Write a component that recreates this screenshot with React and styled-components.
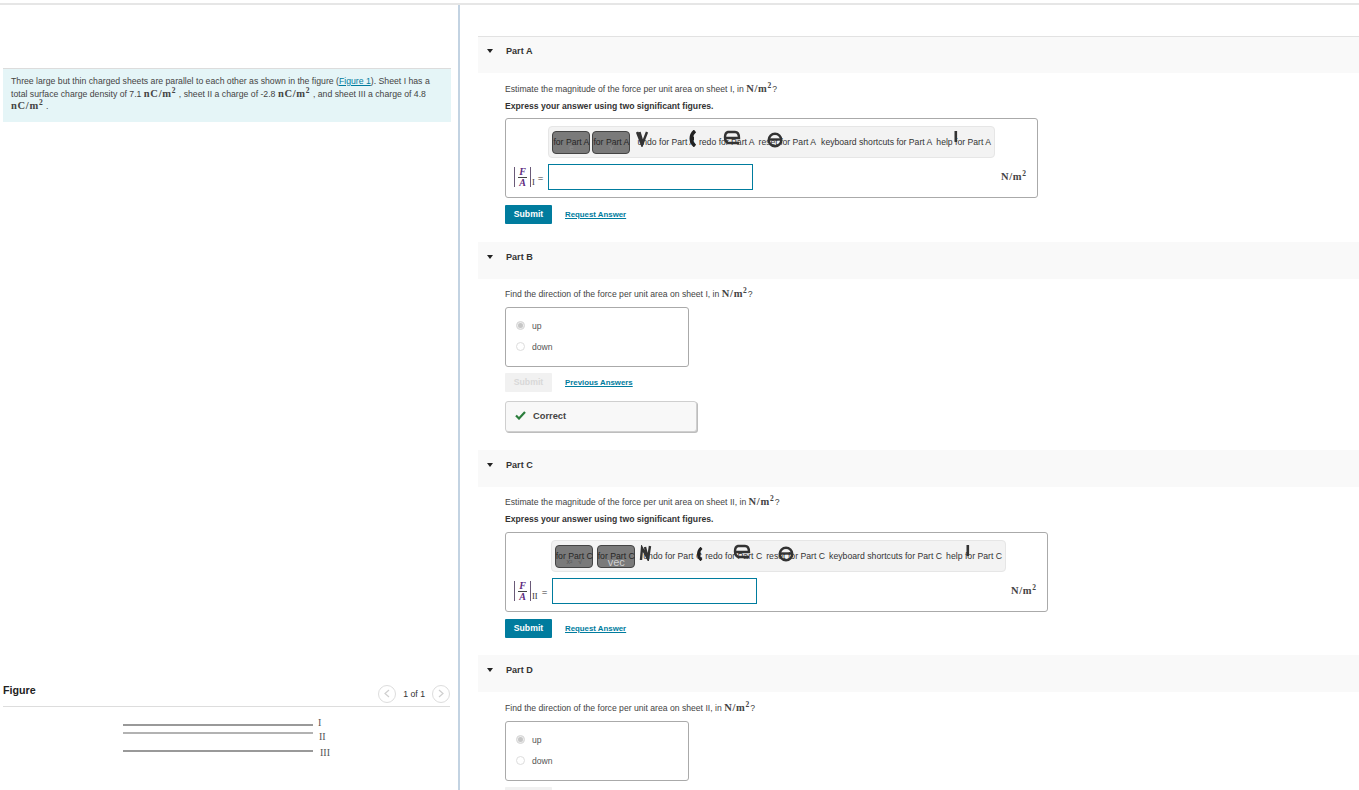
import React from "react";
import styled, { createGlobalStyle } from "styled-components";

const GlobalStyle = createGlobalStyle`
  html, body {
    margin: 0;
    padding: 0;
    height: 790px;
    overflow: hidden;
    background: #fff;
    font-family: "Liberation Sans", Arial, sans-serif;
    color: #333;
  }
  * { box-sizing: border-box; }
`;

const Page = styled.div`
  display: flex;
  height: 787px;
  margin-top: 3px;
  border-top: 2px solid #e6e6e6;
  overflow: hidden;
`;

const LeftPanel = styled.aside`
  display: flex;
  flex-direction: column;
  flex: 0 0 460px;
  padding: 63px 7px 0 3px;
  border-right: 2px solid #c3d3e2;
`;

const Intro = styled.div`
  background: #e5f5f7;
  border-top: 1px solid #dcdcdc;
  padding: 6px 8px 0;
  font-size: 8.7px;
  line-height: 12.5px;
  height: 54px;
  color: #444;
`;

const Link = styled.a`
  color: #007c9e;
  text-decoration: underline;
`;

const Math = styled.span`
  font-family: "Liberation Serif", serif;
  font-weight: bold;
  font-size: 10.5px;
  letter-spacing: 0.7px;
  line-height: 1;
  color: #444;
  sup {
    font-size: 7.5px;
    line-height: 0;
    letter-spacing: 0;
    vertical-align: 4px;
    margin-right: 1px;
  }
`;

const FigureBlock = styled.section`
  margin: auto 1px 0 0;
  height: 107px;
`;

const FigureHead = styled.div`
  display: flex;
  align-items: center;
  justify-content: space-between;
  height: 24px;
  border-bottom: 1px solid #ddd;
  padding-bottom: 5px;
`;

const FigureTitle = styled.h3`
  margin: -5px 0 0;
  font-size: 10.7px;
  font-weight: bold;
  color: #222;
`;

const Pager = styled.div`
  display: flex;
  align-items: center;
  gap: 7px;
  font-size: 8.7px;
  margin-top: 3px;
`;

const PageBtn = styled.span`
  display: flex;
  align-items: center;
  justify-content: center;
  width: 18px;
  height: 18px;
  border: 1px solid #ddd;
  border-radius: 50%;
`;

const FigureArt = styled.svg`
  display: block;
  margin: 9px 0 0 120px;
`;

const RightPanel = styled.main`
  flex: 1;
  min-width: 0;
  padding: 31px 0 0 18px;
`;

const PartHead = styled.header`
  display: flex;
  align-items: center;
  gap: 13px;
  height: 37px;
  padding: 0 0 8px 9px;
  background: #f9f9f9;
  border-top: 1px solid ${(p) => (p.$first ? "#e2e2e2" : "#f9f9f9")};
  font-size: 9.1px;
  font-weight: bold;
  color: #333;
`;

const Arrow = styled.span`
  width: 0;
  height: 0;
  border-left: 3.5px solid transparent;
  border-right: 3.5px solid transparent;
  border-top: 4px solid #222;
`;

const PartBody = styled.div`
  padding: ${(p) => p.$top || 7}px 0 ${(p) => p.$bottom ?? 18}px 27px;
`;

const Prompt = styled.p`
  margin: 0;
  height: 17px;
  font-size: 8.65px;
  line-height: 19px;
  color: #444;
`;

const Note = styled(Prompt)`
  font-weight: bold;
  color: #333;
`;

const AnswerBox = styled.div`
  display: grid;
  grid-template-columns: auto 1fr;
  column-gap: 5px;
  row-gap: 6px;
  align-items: center;
  width: ${(p) => p.$width}px;
  height: 80px;
  margin-top: ${(p) => p.$top}px;
  padding: 7px 9px 7px 8px;
  border: 1px solid #aaa;
  border-radius: 3px;
`;

const Toolbar = styled.div`
  grid-column: 2;
  justify-self: start;
  display: flex;
  align-items: center;
  height: 32px;
  padding: 0 3px;
  background: #f3f3f3;
  border: 1px solid #e6e6e6;
  border-radius: 4px;
  white-space: nowrap;
  font-size: ${(p) => p.$size}px;
  color: #333;
  margin-left: ${(p) => p.$shift}px;
`;

const MathBtn = styled.span`
  position: relative;
  flex: none;
  display: flex;
  align-items: center;
  justify-content: center;
  width: 38px;
  height: 23px;
  margin-right: ${(p) => p.$gap}px;
  background: #7a7a7a;
  border: 1px solid #444;
  border-radius: 4px;
  color: #262626;
`;

const BtnMark = styled.span`
  position: absolute;
  bottom: 0;
  left: 0;
  right: 0;
  text-align: center;
  font-size: ${(p) => p.$size}px;
  line-height: 10px;
  color: ${(p) => p.$color};
`;

const ToolItem = styled.span`
  position: relative;
  flex: none;
  margin-left: ${(p) => p.$gap}px;
`;

const Glyph = styled.svg`
  position: absolute;
  left: ${(p) => p.$left}px;
  top: ${(p) => p.$top}px;
`;

const FormulaLabel = styled.span`
  display: flex;
  align-items: center;
  font-family: "Liberation Serif", serif;
  font-size: 9px;
  color: #333;
`;

const AbsBars = styled.span`
  display: flex;
  align-items: center;
  justify-content: center;
  width: 17px;
  height: 20px;
  border-left: 1px solid #6a5a78;
  border-right: 1px solid #6a5a78;
`;

const Fraction = styled.span`
  display: flex;
  flex-direction: column;
  align-items: center;
  font-style: italic;
  font-weight: bold;
  font-size: 10px;
  line-height: 9.5px;
  color: #5d2a7e;
  span + span {
    border-top: 1px solid #444;
    padding: 0 1px;
  }
`;

const Sub = styled.span`
  align-self: flex-end;
  font-size: 8.5px;
  line-height: 9px;
  margin: 0 ${(p) => p.$right}px 0 1px;
`;

const Equals = styled.span`
  font-family: "Liberation Sans", sans-serif;
  font-size: 9.5px;
`;

const InputRow = styled.div`
  grid-column: 2;
  display: flex;
  align-items: center;
  justify-content: space-between;
  padding-right: 1px;
`;

const TextInput = styled.input`
  width: 205px;
  height: 26px;
  border: 1px solid #007c9e;
  background: #fff;
  padding: 0 4px;
  outline: none;
`;

const ChoiceBox = styled.div`
  display: flex;
  flex-direction: column;
  gap: 10px;
  width: 184px;
  height: 60px;
  margin-top: 5px;
  padding: 12px 10px;
  border: 1px solid #aaa;
  border-radius: 3px;
`;

const Choice = styled.label`
  display: flex;
  align-items: center;
  gap: 7px;
  height: 11px;
  font-size: 8.6px;
  color: #555;
`;

const Radio = styled.span`
  width: 9px;
  height: 9px;
  border-radius: 50%;
  border: 1px solid #ddd;
  background: ${(p) => (p.$on ? "#c6c6c6" : "#fff")};
  box-shadow: ${(p) => (p.$on ? "inset 0 0 0 1px #eee" : "none")};
`;

const Actions = styled.div`
  display: flex;
  align-items: center;
  gap: 13px;
  margin-top: ${(p) => p.$top}px;
`;

const SubmitBtn = styled.button`
  width: 47px;
  height: 19px;
  padding: 0 0 2px;
  border: none;
  border-radius: 1px;
  font-family: inherit;
  font-size: 8.7px;
  font-weight: bold;
  background: ${(p) => (p.disabled ? "#f1f1f1" : "#007c9e")};
  color: ${(p) => (p.disabled ? "#d8d8d8" : "#fff")};
`;

const ActionLink = styled(Link)`
  font-size: 7.85px;
  font-weight: bold;
`;

const Feedback = styled.div`
  display: flex;
  align-items: center;
  gap: 7px;
  width: 192px;
  height: 31px;
  margin-top: 9px;
  padding: 0 8px 2px 9px;
  background: #f8f8f8;
  border: 1px solid #cfcfcf;
  border-radius: 3px;
  box-shadow: 1px 1px 0 #bdbdbd;
  font-size: 9.3px;
  font-weight: bold;
  color: #444;
`;

const Units = () => (
  <Math>
    N/m<sup>2</sup>
  </Math>
);

const Charge = () => (
  <Math>
    nC/m<sup>2</sup>
  </Math>
);

const UndoMark = ({ left, top, c }) => (
  <Glyph $left={left} $top={top} width="17" height="16" viewBox="0 0 17 16" fill="none" stroke="#333" strokeWidth="2.4">
    {c ? <path d="M2 15 L3 3 L9 14 L11 1 M6 2 L9 14" /> : <path d="M1 1 L6 14 L11 1 M3.5 1 L7 13" />}
  </Glyph>
);

const RedoMark = ({ left, top, h }) => (
  <Glyph $left={left} $top={top} width="9" height={h} viewBox="0 0 9 17" fill="none" stroke="#222" strokeWidth="3.5">
    <path d="M7 1 C2 5 2 12 7 16 M2 8.5 H6" />
  </Glyph>
);

const ResetMark = ({ left, top }) => (
  <Glyph $left={left} $top={top} width="18" height="16" viewBox="0 0 18 16" fill="none" stroke="#333" strokeWidth="2.4">
    <path d="M16 13 H5 C1 11 1 3 5 2 H12 C15 2 16 5 16 8 H2" />
  </Glyph>
);

const ClearMark = ({ left, top }) => (
  <Glyph $left={left} $top={top} width="16" height="18" viewBox="0 0 16 18" fill="none" stroke="#333" strokeWidth="2.4">
    <circle cx="8" cy="9" r="6.3" />
    <path d="M1 8.5 H15" />
  </Glyph>
);

const HelpMark = ({ left, top }) => (
  <Glyph $left={left} $top={top} width="4" height="11" viewBox="0 0 4 11" fill="#333">
    <rect x="0.5" y="0" width="2.6" height="11" />
  </Glyph>
);

const MathToolbar = ({ part, c }) => {
  const label = `for Part ${part}`;
  return (
    <Toolbar $size={c ? 8.7 : 8.65} $shift={c ? -1 : 0}>
      <MathBtn $gap={c ? 4 : 2}>
        {label}
        {c ? <BtnMark $size={7} $color="#555">x² &nbsp; √</BtnMark> : <BtnMark $size={8} $color="#8c8c8c">e</BtnMark>}
      </MathBtn>
      <MathBtn $gap={c ? 4 : 2}>
        {label}
        {c ? <BtnMark $size={11} $color="#d0d0d0">vec</BtnMark> : <BtnMark $size={8} $color="#959595">√</BtnMark>}
      </MathBtn>
      <ToolItem $gap={c ? 4 : 5}>
        <UndoMark left={c ? -4 : -1} top={-6} c={c} />
        undo {label}
      </ToolItem>
      <ToolItem $gap={c ? 3 : 4}>
        <RedoMark left={c ? -10 : -11} top={c ? -4 : -7} h={c ? 14 : 17} />
        <ResetMark left={c ? 28 : 24} top={-7} />
        redo {label}
      </ToolItem>
      <ToolItem $gap={4}>
        <ClearMark left={c ? 12 : 8} top={-6} />
        reset {label}
      </ToolItem>
      <ToolItem $gap={c ? 4 : 5}>keyboard shortcuts {label}</ToolItem>
      <ToolItem $gap={4}>
        <HelpMark left={c ? 20 : 18} top={-6} />
        help {label}
      </ToolItem>
    </Toolbar>
  );
};

const Formula = ({ sub, c }) => (
  <FormulaLabel>
    <AbsBars>
      <Fraction>
        <span>F</span>
        <span>A</span>
      </Fraction>
    </AbsBars>
    <Sub $right={c ? 4 : 3}>{sub}</Sub>
    <Equals>=</Equals>
  </FormulaLabel>
);

const Check = () => (
  <svg width="11" height="9" viewBox="0 0 11 9" fill="none" stroke="#2b7d3c" strokeWidth="2.2">
    <path d="M1 4.5 L4 7.5 L10 1" />
  </svg>
);

const Chevron = ({ d }) => (
  <svg width="6" height="9" viewBox="0 0 6 9" fill="none" stroke="#cfcfcf" strokeWidth="1.2">
    <path d={d} />
  </svg>
);

const MagnitudePart = ({ part, sheet, sub, width, top, boxTop, bottom, first, c }) => (
  <section>
    <PartHead $first={first}>
      <Arrow />
      Part {part}
    </PartHead>
    <PartBody $top={top} $bottom={bottom}>
      <Prompt>
        Estimate the magnitude of the force per unit area on sheet {sheet}, in <Units />?
      </Prompt>
      <Note>Express your answer using two significant figures.</Note>
      <AnswerBox $width={width} $top={boxTop}>
        <MathToolbar part={part} c={c} />
        <Formula sub={sub} c={c} />
        <InputRow>
          <TextInput />
          <Units />
        </InputRow>
      </AnswerBox>
      <Actions $top={7}>
        <SubmitBtn>Submit</SubmitBtn>
        <ActionLink href="#">Request Answer</ActionLink>
      </Actions>
    </PartBody>
  </section>
);

const DirectionPart = ({ part, sheet, top, children }) => (
  <section>
    <PartHead>
      <Arrow />
      Part {part}
    </PartHead>
    <PartBody $top={top}>
      <Prompt>
        Find the direction of the force per unit area on sheet {sheet}, in <Units />?
      </Prompt>
      <ChoiceBox>
        <Choice>
          <Radio $on />
          up
        </Choice>
        <Choice>
          <Radio />
          down
        </Choice>
      </ChoiceBox>
      {children}
    </PartBody>
  </section>
);

export default function App() {
  return (
    <>
      <GlobalStyle />
      <Page>
        <LeftPanel>
          <Intro>
            Three large but thin charged sheets are parallel to each other as shown in the figure (
            <Link href="#">Figure 1</Link>). Sheet I has a total surface charge density of 7.1{" "}
            <Charge /> , sheet II a charge of -2.8 <Charge /> , and sheet III a charge of 4.8{" "}
            <Charge /> .
          </Intro>
          <FigureBlock>
            <FigureHead>
              <FigureTitle>Figure</FigureTitle>
              <Pager>
                <PageBtn>
                  <Chevron d="M5 1 L1 4.5 L5 8" />
                </PageBtn>
                1 of 1
                <PageBtn>
                  <Chevron d="M1 1 L5 4.5 L1 8" />
                </PageBtn>
              </Pager>
            </FigureHead>
            <FigureArt width="220" height="50" viewBox="0 0 220 50">
              <g stroke="#777" strokeWidth="1.4">
                <line x1="0" y1="9" x2="190" y2="9" />
                <line x1="0" y1="17" x2="190" y2="17" stroke="#999" />
                <line x1="0" y1="35" x2="190" y2="35" />
              </g>
              <g fontFamily="Liberation Serif, serif" fontSize="10" fill="#555">
                <text x="195" y="10">I</text>
                <text x="196" y="24">II</text>
                <text x="197" y="40">III</text>
              </g>
            </FigureArt>
          </FigureBlock>
        </LeftPanel>
        <RightPanel>
          <MagnitudePart part="A" sheet="I" sub="I" width={533} boxTop={4} first />
          <DirectionPart part="B" sheet="I" top={6}>
            <Actions $top={6}>
              <SubmitBtn disabled>Submit</SubmitBtn>
              <ActionLink href="#">Previous Answers</ActionLink>
            </Actions>
            <Feedback>
              <Check />
              Correct
            </Feedback>
          </DirectionPart>
          <MagnitudePart part="C" sheet="II" sub="II" width={543} top={6} boxTop={5} bottom={17} c />
          <DirectionPart part="D" sheet="II">
            <Actions $top={6}>
              <SubmitBtn disabled>Submit</SubmitBtn>
            </Actions>
          </DirectionPart>
        </RightPanel>
      </Page>
    </>
  );
}
